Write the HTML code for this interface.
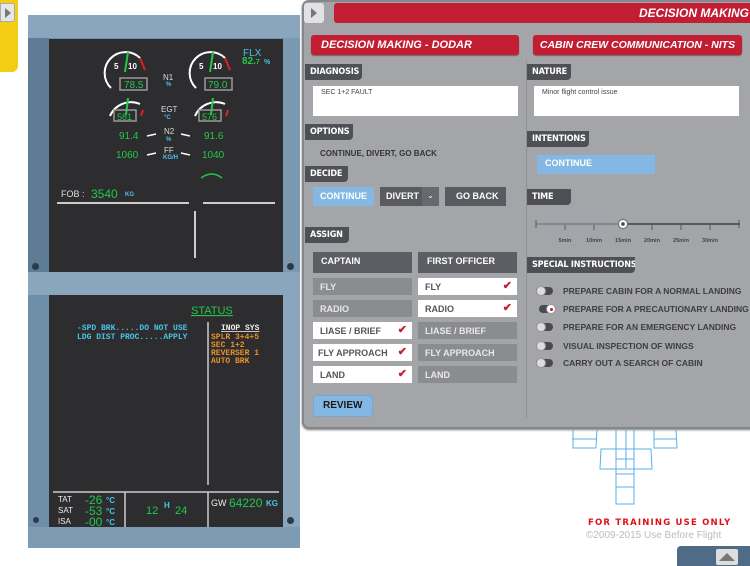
<!DOCTYPE html>
<html><head><style>
*{margin:0;padding:0;box-sizing:border-box}
body{width:750px;height:563px;background:#fff;position:relative;overflow:hidden;font-family:"Liberation Sans",sans-serif}
.a{position:absolute}
.lbl{position:absolute;background:#4f5056;color:#fff;font-weight:bold;font-size:9px;padding:3px 0 0 5px;height:16px;border-bottom-right-radius:4px;font-family:"Liberation Sans Narrow","DejaVu Sans Condensed","Liberation Sans",sans-serif;white-space:nowrap;overflow:hidden;letter-spacing:-0.2px}
.redb{position:absolute;background:#c21d32;color:#fff;font-style:italic;font-weight:bold;font-size:11px;border-radius:3px;height:20px;padding-top:4px;box-shadow:0 1px 1px #666;white-space:nowrap}
.row{position:absolute;height:17px;font-size:9px;font-weight:bold;padding:4px 0 0 7px;white-space:nowrap}
.on{background:#fff;color:#555}
.off{background:#8b8c90;color:#e8e8ea}
.chk{position:absolute;right:5px;top:1px;color:#c21d32;font-size:11px}
.si{position:absolute;left:563px;font-size:8.5px;font-weight:bold;color:#3d3d42;white-space:nowrap}
.tg{position:absolute;left:536px;width:17px;height:8px;border-radius:4px;background:#4a4a50}
.tg i{position:absolute;left:0;top:-1px;width:10px;height:10px;border-radius:50%;background:#ddd;border:1px solid #999}
</style></head><body>
<div class="a" style="left:0;top:0;width:18px;height:72px;background:#f2cd13;border-radius:0 0 6px 0"></div>
<div class="a" style="left:0;top:3px;width:15px;height:19px;background:#e6e6e6;border:1px solid #aaa;border-radius:0 3px 3px 0"><div class="a" style="left:4px;top:4px;border-left:6px solid #777;border-top:5px solid transparent;border-bottom:5px solid transparent"></div></div>
<div class="a" style="left:28px;top:15px;width:272px;height:533px;background:#6f8ea8"></div>
<div class="a" style="left:28px;top:15px;width:272px;height:23px;background:#8aa6bd"></div>
<div class="a" style="left:28px;top:38px;width:21px;height:234px;background:#5e7c96"></div>
<div class="a" style="left:283px;top:38px;width:17px;height:234px;background:#7a98b0"></div>
<div class="a" style="left:28px;top:272px;width:272px;height:23px;background:#8aa6bd"></div>
<div class="a" style="left:283px;top:295px;width:17px;height:253px;background:#8aa6bd"></div>
<div class="a" style="left:28px;top:527px;width:272px;height:21px;background:#7d9bb3"></div>
<div class="a" style="left:32px;top:263px;width:7px;height:7px;border-radius:50%;background:#2a3a48"></div>
<div class="a" style="left:287px;top:263px;width:7px;height:7px;border-radius:50%;background:#2a3a48"></div>
<div class="a" style="left:33px;top:517px;width:6px;height:6px;border-radius:50%;background:#2a3a48"></div>
<div class="a" style="left:287px;top:517px;width:7px;height:7px;border-radius:50%;background:#2a3a48"></div>
<svg class="a" style="left:49px;top:39px" width="234" height="233" viewBox="49 39 234 233">
<rect x="49" y="39" width="234" height="233" fill="#2d2d2f"/>
<g fill="none" stroke="#fff" stroke-width="2">
<path d="M111 88 A20 20 0 0 1 140 58"/><path d="M196 88 A20 20 0 0 1 225 58"/>
<path d="M110 116 A23 23 0 0 1 140 104"/><path d="M195 116 A23 23 0 0 1 225 104"/>
</g>
<g stroke="#e02020" stroke-width="2"><line x1="140" y1="58" x2="145" y2="70"/><line x1="225" y1="58" x2="230" y2="70"/><line x1="143" y1="110" x2="141" y2="116"/><line x1="228" y1="110" x2="226" y2="116"/></g>
<g stroke="#22c84a" stroke-width="2"><line x1="128" y1="52" x2="125" y2="72"/><line x1="213" y1="52" x2="210" y2="72"/><line x1="128" y1="98" x2="126" y2="115"/><line x1="213" y1="98" x2="211" y2="115"/></g>
<g fill="none" stroke="#999" stroke-width="1.5"><rect x="120" y="78" width="27" height="12"/><rect x="205" y="78" width="27" height="12"/><rect x="114" y="110" width="22" height="11"/><rect x="199" y="110" width="22" height="11"/></g>
<g font-family="Liberation Sans" font-size="10" fill="#22c84a"><text x="124" y="88">78.5</text><text x="208" y="88">79.0</text><text x="117" y="120" font-size="9">581</text><text x="202" y="120" font-size="9">576</text>
<text x="119" y="139">91.4</text><text x="204" y="139">91.6</text><text x="116" y="158">1060</text><text x="202" y="158">1040</text>
<text x="242" y="64" font-weight="bold">82.<tspan font-size="7">7</tspan></text><text x="91" y="198" font-size="12">3540</text></g>
<g font-family="Liberation Sans" font-size="8" fill="#fff" font-weight="bold"><text x="114" y="69">5</text><text x="128" y="69">10</text><text x="199" y="69">5</text><text x="213" y="69">10</text></g>
<g font-family="Liberation Sans" font-size="8" fill="#ddd"><text x="163" y="80">N1</text><text x="161" y="112">EGT</text><text x="164" y="134">N2</text><text x="164" y="153">FF</text><text x="61" y="197" font-size="9">FOB :</text></g>
<g font-family="Liberation Sans" font-size="6" fill="#4cc2e8" font-weight="bold"><text x="166" y="86">%</text><text x="164" y="119">°C</text><text x="166" y="141">%</text><text x="163" y="159">KG/H</text><text x="125" y="196">KG</text><text x="264" y="64" font-size="7">%</text></g>
<text x="243" y="56" font-family="Liberation Sans" font-size="10" fill="#4cc2e8">FLX</text>
<g stroke="#fff" stroke-width="1.5"><line x1="147" y1="136" x2="156" y2="134"/><line x1="181" y1="134" x2="190" y2="136"/><line x1="147" y1="155" x2="156" y2="153"/><line x1="181" y1="153" x2="190" y2="155"/></g>
<path d="M201 178 Q212 170 222 178" stroke="#22c84a" fill="none" stroke-width="1.5"/>
<g stroke="#ccc" stroke-width="2"><line x1="57" y1="203" x2="189" y2="203"/><line x1="203" y1="203" x2="275" y2="203"/><line x1="195" y1="211" x2="195" y2="258"/></g>
</svg>
<svg class="a" style="left:49px;top:295px" width="234" height="232" viewBox="49 295 234 232">
<rect x="49" y="295" width="234" height="232" fill="#2d2d2f"/>
<text x="191" y="314" font-family="Liberation Sans" font-size="11" fill="#22c84a" text-decoration="underline">STATUS</text>
<g font-family="Liberation Mono" font-size="8" font-weight="bold" fill="#4cc2e8"><text x="77" y="330">-SPD BRK.....DO NOT USE</text><text x="77" y="339">LDG DIST PROC.....APPLY</text></g>
<text x="221" y="330" font-family="Liberation Mono" font-size="8" font-weight="bold" fill="#eee" text-decoration="underline">INOP SYS</text>
<g font-family="Liberation Mono" font-size="8" font-weight="bold" fill="#e8902a"><text x="211" y="339">SPLR 3+4+5</text><text x="211" y="347">SEC 1+2</text><text x="211" y="355">REVERSER 1</text><text x="211" y="363">AUTO BRK</text></g>
<g stroke="#ccc" stroke-width="1.5"><line x1="208" y1="322" x2="208" y2="485"/><line x1="53" y1="492" x2="279" y2="492"/><line x1="125" y1="492" x2="125" y2="527"/><line x1="208" y1="492" x2="208" y2="527"/></g>
<g font-family="Liberation Sans" font-size="8" fill="#eee"><text x="58" y="502">TAT</text><text x="58" y="513">SAT</text><text x="58" y="524">ISA</text><text x="211" y="506" font-size="9">GW</text></g>
<g font-family="Liberation Sans" font-size="12" fill="#22c84a"><text x="85" y="504">-26</text><text x="85" y="515">-53</text><text x="85" y="526">-00</text><text x="146" y="514" font-size="11">12</text><text x="175" y="514" font-size="11">24</text><text x="229" y="507" font-size="12">64220</text></g>
<g font-family="Liberation Sans" font-size="8" fill="#4cc2e8" font-weight="bold"><text x="106" y="503">°C</text><text x="106" y="514">°C</text><text x="106" y="525">°C</text><text x="164" y="508">H</text><text x="266" y="506">KG</text></g>
</svg>
<div class="a" style="left:302px;top:0;width:452px;height:429px;background:#a4a5a9;border:2px solid #86878b;border-radius:7px 0 0 7px;box-shadow:0 1px 2px #777"></div>
<div class="a" style="left:304px;top:3px;width:20px;height:20px;background:#e2e2e4;border-radius:3px"><div class="a" style="left:7px;top:5px;border-left:6px solid #777;border-top:5px solid transparent;border-bottom:5px solid transparent"></div></div>
<div class="a" style="left:334px;top:3px;width:420px;height:20px;background:#c21d32;border-radius:3px 0 0 3px;color:#fff;font-style:italic;font-weight:bold;font-size:12px;text-align:right;padding:3px 5px 0 0">DECISION MAKING</div>
<div class="redb" style="left:311px;top:35px;width:208px;padding-left:10px">DECISION MAKING - DODAR</div>
<div class="redb" style="left:533px;top:35px;width:209px;text-align:center;font-size:10.5px">CABIN CREW COMMUNICATION - NITS</div>
<div class="a" style="left:526px;top:60px;width:1px;height:358px;background:#909195"></div>
<div class="lbl" style="left:305px;top:64px;width:57px">DIAGNOSIS</div>
<div class="a" style="left:313px;top:86px;width:205px;height:30px;background:#fff;font-size:7px;color:#444;padding:3px 8px">SEC 1+2 FAULT</div>
<div class="lbl" style="left:527px;top:64px;width:44px">NATURE</div>
<div class="a" style="left:534px;top:86px;width:205px;height:30px;background:#fff;font-size:7px;color:#444;padding:3px 8px">Minor flight control issue</div>
<div class="lbl" style="left:305px;top:124px;width:48px">OPTIONS</div>
<div class="a" style="left:320px;top:149px;font-size:8px;font-weight:bold;color:#333">CONTINUE, DIVERT, GO BACK</div>
<div class="lbl" style="left:305px;top:166px;width:43px">DECIDE</div>
<div class="a" style="left:313px;top:187px;width:61px;height:19px;background:#84b8e4;color:#fff;font-size:9px;font-weight:bold;padding:4px 0 0 7px">CONTINUE</div>
<div class="a" style="left:380px;top:187px;width:59px;height:19px;background:#5a5b60;color:#fff;font-size:9px;font-weight:bold;padding:4px 0 0 6px">DIVERT<span style="position:absolute;left:42px;top:0;width:17px;height:19px;background:#68696e;font-size:8px;text-align:center;padding-top:4px;font-weight:normal">⌄</span></div>
<div class="a" style="left:445px;top:187px;width:61px;height:19px;background:#5a5b60;color:#fff;font-size:9px;font-weight:bold;padding:4px 0 0 11px">GO BACK</div>
<div class="lbl" style="left:527px;top:131px;width:62px">INTENTIONS</div>
<div class="a" style="left:537px;top:155px;width:118px;height:19px;background:#84b8e4;color:#fff;font-size:9px;font-weight:bold;padding:3px 0 0 8px">CONTINUE</div>
<div class="lbl" style="left:527px;top:189px;width:44px">TIME</div>
<div class="a" style="left:536px;top:223px;width:204px;height:2px;background:#58595d"></div>
<div class="a" style="left:536px;top:223px;width:87px;height:2px;background:#7a8a98"></div>
<svg class="a" style="left:530px;top:218px" width="215" height="30"><g stroke="#58595d"><line x1="6" y1="2" x2="6" y2="10"/><line x1="35" y1="7" x2="35" y2="12"/><line x1="64" y1="7" x2="64" y2="12"/><line x1="122" y1="7" x2="122" y2="12"/><line x1="151" y1="7" x2="151" y2="12"/><line x1="180" y1="7" x2="180" y2="12"/><line x1="209" y1="2" x2="209" y2="10"/></g>
<g font-family="Liberation Sans" font-size="5.5" fill="#444" font-weight="bold" text-anchor="middle"><text x="35" y="24">5min</text><text x="64" y="24">10min</text><text x="93" y="24">15min</text><text x="122" y="24">20min</text><text x="151" y="24">25min</text><text x="180" y="24">30min</text></g>
<circle cx="93" cy="6" r="4.5" fill="#fff" stroke="#666"/><circle cx="93" cy="6" r="1.8" fill="#444"/></svg>
<div class="lbl" style="left:305px;top:227px;width:44px">ASSIGN</div>
<div class="a" style="left:313px;top:252px;width:99px;height:21px;background:#5d5e63;color:#fff;font-size:9px;font-weight:bold;padding:4px 0 0 8px">CAPTAIN</div>
<div class="a" style="left:418px;top:252px;width:99px;height:21px;background:#5d5e63;color:#fff;font-size:9px;font-weight:bold;padding:4px 0 0 9px">FIRST OFFICER</div>
<div class="row off" style="left:313px;top:278px;width:99px">FLY</div>
<div class="row on" style="left:418px;top:278px;width:99px">FLY<span class="chk">✔</span></div>
<div class="row off" style="left:313px;top:300px;width:99px">RADIO</div>
<div class="row on" style="left:418px;top:300px;width:99px">RADIO<span class="chk">✔</span></div>
<div class="row on" style="left:313px;top:322px;width:99px">LIASE / BRIEF<span class="chk">✔</span></div>
<div class="row off" style="left:418px;top:322px;width:99px">LIASE / BRIEF</div>
<div class="row on" style="left:313px;top:344px;width:99px;padding-left:5px">FLY APPROACH<span class="chk">✔</span></div>
<div class="row off" style="left:418px;top:344px;width:99px">FLY APPROACH</div>
<div class="row on" style="left:313px;top:366px;width:99px">LAND<span class="chk">✔</span></div>
<div class="row off" style="left:418px;top:366px;width:99px">LAND</div>
<div class="a" style="left:313px;top:395px;width:60px;height:22px;background:#84b8e4;border:1px solid #7aa6cc;border-radius:4px;font-size:10px;font-weight:bold;color:#1a1a1a;padding:4px 0 0 9px">REVIEW</div>
<div class="lbl" style="left:527px;top:257px;width:108px">SPECIAL INSTRUCTIONS</div>
<div class="tg" style="top:287px"><i></i></div><div class="si" style="top:286px">PREPARE CABIN FOR A NORMAL LANDING</div>
<div class="tg" style="top:305px;left:539px"><i style="left:7px;background:#fff"><b style="position:absolute;left:3px;top:3px;width:3px;height:3px;border-radius:50%;background:#c21d32"></b></i></div><div class="si" style="top:304px">PREPARE FOR A PRECAUTIONARY LANDING</div>
<div class="tg" style="top:323px"><i></i></div><div class="si" style="top:322px">PREPARE FOR AN EMERGENCY LANDING</div>
<div class="tg" style="top:342px"><i></i></div><div class="si" style="top:341px">VISUAL INSPECTION OF WINGS</div>
<div class="tg" style="top:359px"><i></i></div><div class="si" style="top:358px">CARRY OUT A SEARCH OF CABIN</div>
<svg class="a" style="left:560px;top:429px" width="130" height="80"><g fill="none" stroke="#5ab0e8" stroke-width="1">
<path d="M13 0 V19 H36 L37 0"/><line x1="12" y1="10" x2="36" y2="10"/>
<path d="M116 0 L117 19 H94 V0"/><line x1="94" y1="10" x2="117" y2="10"/>
<path d="M56 0 V75 H74 V0"/><line x1="66" y1="0" x2="66" y2="39"/>
<path d="M41 20 H91 L92 40 H40 Z"/>
<line x1="56" y1="30" x2="74" y2="30"/><line x1="56" y1="45" x2="74" y2="45"/><line x1="56" y1="58" x2="74" y2="58"/>
</g></svg>
<div class="a" style="left:588px;top:518px;font-size:8.5px;font-weight:bold;color:#e0101a;letter-spacing:1.2px;font-family:'DejaVu Sans',sans-serif">FOR TRAINING USE ONLY</div>
<div class="a" style="left:586px;top:530px;font-size:10px;color:#bbb">©2009-2015 Use Before Flight</div>
<div class="a" style="left:677px;top:546px;width:80px;height:20px;background:#4f6b85;border-radius:4px 0 0 0"></div>
<div class="a" style="left:716px;top:549px;width:22px;height:16px;background:#ddd;border-radius:2px"><div class="a" style="left:3px;top:4px;border-bottom:8px solid #777;border-left:8px solid transparent;border-right:8px solid transparent"></div></div>
</body></html>
